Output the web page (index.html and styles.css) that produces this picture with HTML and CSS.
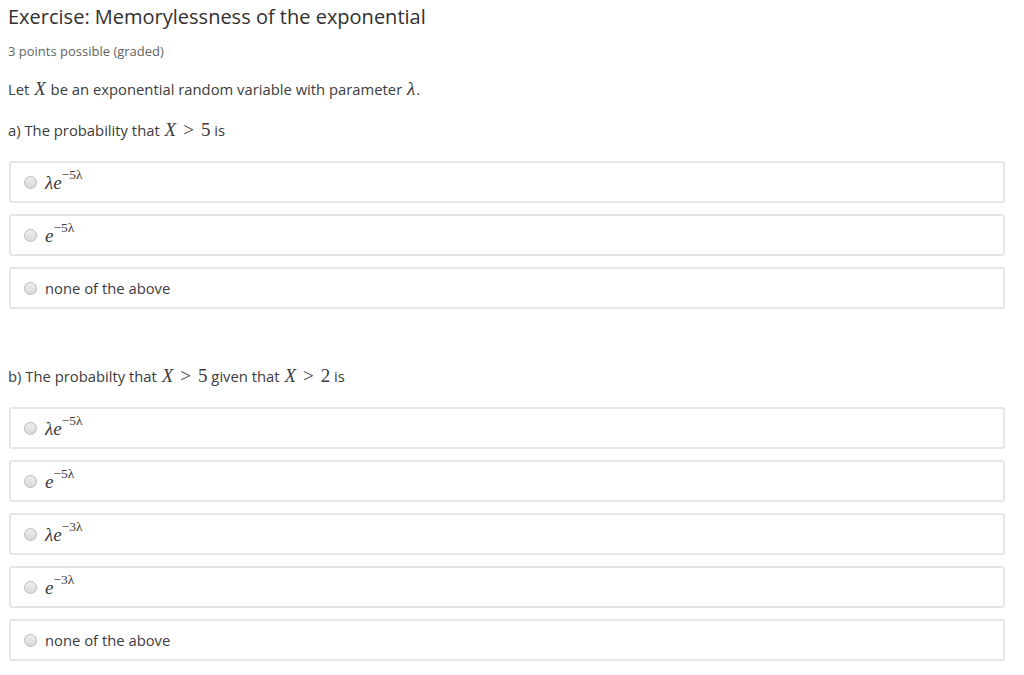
FILE: index.html
```html
<!DOCTYPE html>
<html lang="en">
<head>
  <meta charset="UTF-8" />
  <title>Exercise: Memorylessness of the exponential</title>
  <link rel="stylesheet" href="styles.css">
</head>
<body>
  <div class="problem">
    <h2 class="problem-title">Exercise: Memorylessness of the exponential</h2>
    <div class="points">3 points possible (graded)</div>

    <p class="intro">Let <span class="mi">X</span> be an exponential random variable with parameter <span class="mi">λ</span>.</p>

    <!-- part a -->
    <p class="question">a) The probability that <span class="mi">X</span><span class="mo">&gt;</span><span class="mn">5</span> is</p>
    <div class="choices">
      <label class="choice"><span class="radio"></span><span class="math"><span class="mi">λe</span><sup>−5λ</sup></span></label>
      <label class="choice"><span class="radio"></span><span class="math"><span class="mi">e</span><sup>−5λ</sup></span></label>
      <label class="choice"><span class="radio"></span>none of the above</label>
    </div>

    <!-- part b -->
    <p class="question part-b">b) The probabilty that <span class="mi">X</span><span class="mo">&gt;</span><span class="mn">5</span> given that <span class="mi">X</span><span class="mo">&gt;</span><span class="mn">2</span> is</p>
    <div class="choices">
      <label class="choice"><span class="radio"></span><span class="math"><span class="mi">λe</span><sup>−5λ</sup></span></label>
      <label class="choice"><span class="radio"></span><span class="math"><span class="mi">e</span><sup>−5λ</sup></span></label>
      <label class="choice"><span class="radio"></span><span class="math"><span class="mi">λe</span><sup>−3λ</sup></span></label>
      <label class="choice"><span class="radio"></span><span class="math"><span class="mi">e</span><sup>−3λ</sup></span></label>
      <label class="choice"><span class="radio"></span>none of the above</label>
    </div>
  </div>
</body>
</html>
```

FILE: styles.css
```css
body {
  margin: 0;
  background: #fff;
  font-family: 'Open Sans', 'Liberation Sans', sans-serif;
  color: #3c3c3c;
}

.problem {
  padding: 3px 19px 0 8px;
}

.problem-title {
  margin: 0;
  font-size: 20px;
  font-weight: 400;
  line-height: 28px;
  color: #313131;
}

.points {
  margin-top: 11px;
  font-size: 13px;
  color: #646464;
  line-height: 18px;
}

.intro,
.question {
  margin: 0;
  font-size: 14.8px;
  line-height: 22px;
}

.intro {
  margin-top: 18px;
}

.question {
  margin-top: 19px;
}

.question.part-b {
  margin-top: 56px;
}

/* math bits, MathJax-ish */
.mi,
.mo,
.mn {
  font-family: 'Liberation Serif', 'DejaVu Serif', serif;
  font-size: 19px;
  line-height: 1;
}

.mi {
  font-style: italic;
  margin: 0 1px;
}

.math .mi {
  margin: 0;
}

.mo {
  margin: 0 7px 0 6px;
}

.math sup {
  font-family: 'Liberation Serif', 'DejaVu Serif', serif;
  font-size: 13.5px;
  line-height: 1;
  position: relative;
  top: -4px;
}

/* answer choices */
.choices {
  display: flex;
  flex-direction: column;
  gap: 11px;
  margin-top: 20px;
}

.choice {
  display: flex;
  align-items: center;
  height: 38px;
  margin-left: 1px;
  padding-left: 13px;
  border: 2px solid #e6e6e6;
  border-radius: 3px;
  font-size: 14.8px;
  color: #3c3c3c;
}

.radio {
  width: 11px;
  height: 11px;
  border-radius: 50%;
  border: 1px solid #b9b9b9;
  background: linear-gradient(#eeeeee, #d9d9d9);
  margin-right: 8px;
  flex: none;
}
```
